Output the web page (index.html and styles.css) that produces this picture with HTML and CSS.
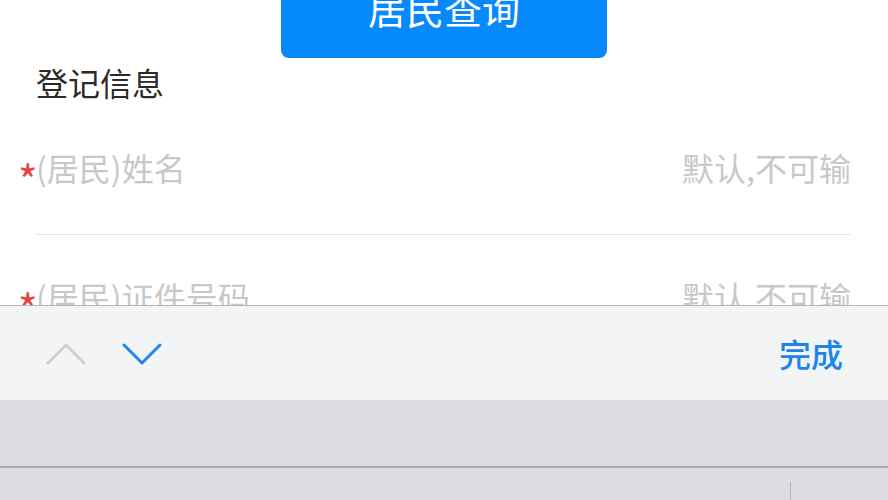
FILE: index.html
```html
<!DOCTYPE html>
<html lang="zh-CN">
<head>
    <meta charset="UTF-8">
    <meta name="viewport" content="width=device-width, initial-scale=1.0">
    <title>居民登记</title>
    <link rel="stylesheet" href="styles.css">
</head>
<body>
    <div class="page">
        <div class="query-bar">
            <button type="button" class="query-btn">居民查询</button>
        </div>

        <h2 class="section-title">登记信息</h2>

        <div class="field">
            <span class="required">*</span>
            <div class="field-body">
                <label class="field-label">(居民)姓名</label>
                <input class="field-input" type="text" placeholder="默认,不可输" readonly>
            </div>
        </div>

        <div class="field">
            <span class="required">*</span>
            <div class="field-body">
                <label class="field-label">(居民)证件号码</label>
                <input class="field-input" type="text" placeholder="默认,不可输" readonly>
            </div>
        </div>
    </div>

    <!-- keyboard accessory bar + keyboard top -->
    <div class="keyboard">
        <div class="accessory">
            <div class="nav-arrows">
                <svg class="arrow arrow-off" width="40" height="22" viewBox="0 0 40 22">
                    <polyline points="2,20 20,2 38,20" fill="none" stroke="currentColor" stroke-width="3" stroke-linecap="round" stroke-linejoin="round"/>
                </svg>
                <svg class="arrow arrow-on" width="40" height="22" viewBox="0 0 40 22">
                    <polyline points="2,2 20,20 38,2" fill="none" stroke="currentColor" stroke-width="3" stroke-linecap="round" stroke-linejoin="round"/>
                </svg>
            </div>
            <span class="done">完成</span>
        </div>
        <div class="keys-top"></div>
        <div class="keys-row">
            <span class="key-split"></span>
        </div>
    </div>
</body>
</html>
```

FILE: styles.css
```css
body {
    margin: 0;
    height: 500px;
    overflow: hidden;
    background-color: #fff;
    font-family: "Noto Sans CJK SC", "Noto Sans", sans-serif;
}
.page {
    margin-top: -32px;
}
.query-bar {
    display: flex;
    justify-content: center;
}
.query-btn {
    width: 326px;
    height: 90px;
    padding: 0 0 10px;
    border: none;
    border-radius: 8px;
    background-color: #0689fd;
    color: #fff;
    font-family: inherit;
    font-size: 38px;
    line-height: 1;
}
.section-title {
    margin: 0;
    padding-left: 36px;
    height: 48px;
    line-height: 48px;
    font-size: 32px;
    font-weight: 400;
    color: #2a2a2a;
}
.field {
    display: flex;
    padding: 0 37px 0 18px;
}
.required {
    width: 18px;
    padding-top: 52px;
    color: #e5433f;
    font-size: 42px;
    line-height: 1;
}
.field-body {
    flex: 1;
    display: flex;
    align-items: center;
    height: 129px;
    padding-bottom: 6px;
    box-sizing: border-box;
    border-bottom: 1px solid #e6e7ea;
}
.field-label {
    font-size: 32px;
    color: #c8c8cc;
    white-space: nowrap;
}
.field-input {
    flex: 1;
    min-width: 0;
    border: none;
    outline: none;
    background: transparent;
    text-align: right;
    font-family: inherit;
    font-size: 32px;
    padding: 0;
}
.field-input::placeholder {
    color: #c8c8cc;
}
.keyboard {
    position: fixed;
    left: 0;
    right: 0;
    top: 305px;
    bottom: 0;
    background-color: #dcdde3;
}
.accessory {
    height: 94px;
    border-top: 1px solid #b5b5b9;
    background-color: #f3f4f6;
    display: flex;
    align-items: center;
    justify-content: space-between;
    padding: 0 45px 0 46px;
}
.nav-arrows {
    display: flex;
    gap: 36px;
    padding-top: 2px;
}
.arrow-off {
    color: #d0d0d3;
}
.arrow-on {
    color: #1e87ec;
}
.done {
    font-size: 32px;
    font-weight: 500;
    color: #1b85ea;
}
.keys-top {
    height: 66px;
    border-bottom: 2px solid #aaaaaf;
}
.keys-row {
    position: relative;
    height: 40px;
}
.key-split {
    position: absolute;
    left: 790px;
    top: 14px;
    width: 1px;
    height: 30px;
    background-color: #b3b3b8;
}
```
